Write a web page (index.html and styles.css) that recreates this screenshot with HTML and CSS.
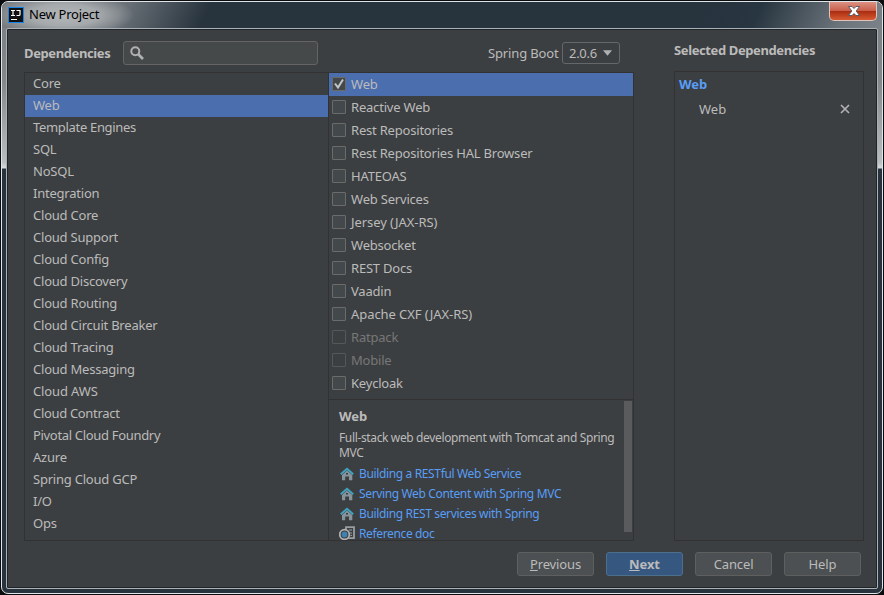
FILE: index.html
```html
<!DOCTYPE html>
<html lang="en">
<head>
<meta charset="utf-8">
<title>New Project</title>
<link rel="stylesheet" href="styles.css">
</head>
<body>
<svg class="defs" width="0" height="0" aria-hidden="true">
  <symbol id="home" viewBox="0 0 16 16"><path d="M8 4.500 13.300 9V14.300H10V10.500H6.200V14.300H3V9Z" fill="#87939a"/><path d="M7 7h2v1.500H7z" fill="#3c3f41"/><path d="M1.800 8.300 8 2.800l6.200 5.500" fill="none" stroke="#3fa3bf" stroke-width="2"/></symbol>
</svg>
<div class="window">
  <header class="titlebar">
    <svg class="logo" viewBox="0 0 16 16"><rect x=".5" y=".5" width="15" height="15" fill="#111" stroke="#1684e8"/><path d="M3 3.500h4M5 3.500v5M3 8.500h4M8.500 3.500H12v4q0 1-1 1H8.500" fill="none" stroke="#fff" stroke-width="1.200"/><path d="M3 12.500h6" stroke="#fff"/></svg>
    <span class="caption">New Project</span>
    <button class="close" aria-label="Close"><svg viewBox="0 0 12 10"><path d="M.5.500H4L6 2.500l2-2H11.500L8.200 5l3.300 4.500H8L6 7.500l-2 2H.5L3.800 5Z" fill="#fff" stroke="#50505e" stroke-width=".9"/></svg></button>
  </header>
  <main class="content">
    <section class="main">
      <div class="toolbar">
        <h2 class="deps">Dependencies</h2>
        <div class="search"><svg viewBox="0 0 14 14"><circle cx="5.300" cy="5.300" r="4" fill="none" stroke="#afb1b3" stroke-width="2"/><path d="m8 8 5 5" stroke="#afb1b3" stroke-width="2.600"/></svg></div>
        <span class="boot">Spring Boot</span>
        <div class="select"><span>2.0.6</span><svg viewBox="0 0 10 6"><path d="M0 0h10L5 6Z" fill="#afb1b3"/></svg></div>
      </div>
      <div class="panes">
        <ul class="cats">
          <li>Core</li><li class="on">Web</li><li class="tight">Template Engines</li><li>SQL</li><li>NoSQL</li><li>Integration</li><li>Cloud Core</li><li>Cloud Support</li><li>Cloud Config</li><li>Cloud Discovery</li><li>Cloud Routing</li><li>Cloud Circuit Breaker</li><li>Cloud Tracing</li><li>Cloud Messaging</li><li class="wide">Cloud AWS</li><li class="tight">Cloud Contract</li><li class="tight">Pivotal Cloud Foundry</li><li>Azure</li><li>Spring Cloud GCP</li><li>I/O</li><li>Ops</li>
        </ul>
        <div class="right">
          <ul class="checks">
            <li class="on"><i><svg viewBox="0 0 12 12"><path d="m2 5.500 3 4 5-8" fill="none" stroke="#c4c6c8" stroke-width="2"/></svg></i>Web</li><li><i></i>Reactive Web</li><li><i></i>Rest Repositories</li><li><i></i>Rest Repositories HAL Browser</li><li><i></i>HATEOAS</li><li><i></i>Web Services</li><li class="wide"><i></i>Jersey (JAX-RS)</li><li><i></i>Websocket</li><li><i></i>REST Docs</li><li><i></i>Vaadin</li><li class="wide"><i></i>Apache CXF (JAX-RS)</li><li class="off"><i></i>Ratpack</li><li class="off"><i></i>Mobile</li><li><i></i>Keycloak</li>
          </ul>
          <div class="detail">
            <div class="info">
              <h3>Web</h3>
              <p>Full-stack web development with Tomcat and Spring<br>MVC</p>
              <a><svg><use href="#home"/></svg>Building a RESTful Web Service</a>
              <a><svg><use href="#home"/></svg>Serving Web Content with Spring MVC</a>
              <a><svg><use href="#home"/></svg>Building REST services with Spring</a>
              <a><svg viewBox="0 0 16 16"><path d="M7 4V1.200H15v11H9" fill="none" stroke="#9a9da0" stroke-width="1.800"/><path d="M10 4h3M11 7h2M11.500 9.500H13" stroke="#9a9da0"/><circle cx="5.500" cy="8.500" r="4.800" fill="#3c3f41" stroke="#afb1b3" stroke-width="1.800"/><circle cx="5.500" cy="8.500" r="2.900" fill="#3d82b0"/></svg>Reference doc</a>
            </div>
            <div class="thumb"></div>
          </div>
        </div>
      </div>
    </section>
    <aside class="selected">
      <h2>Selected Dependencies</h2>
      <div class="box"><h3>Web</h3><div class="item"><span>Web</span><svg viewBox="0 0 10 10"><path d="m1 1 8 8M9 1 1 9" stroke="#afb1b3" stroke-width="1.700"/></svg></div></div>
    </aside>
    <footer class="buttons"><button><u>P</u>revious</button><button class="primary"><u>N</u>ext</button><button>Cancel</button><button>Help</button></footer>
  </main>
</div>
</body>
</html>
```
FILE: styles.css
```css
* { box-sizing: border-box; }
body { margin: 0; background: #0b0c0e; color: #bbb; font: 13px/22px "Noto Sans", sans-serif; overflow: hidden; }
ul, h2, h3, p { margin: 0; padding: 0; list-style: none; }
h2, h3 { font-size: 13px; }
h2 { letter-spacing: -.39px; }
.defs { display: block; height: 0; }
.window { width: 882px; height: 593px; margin: 1px; padding: 0 4px 4px; border: 1px solid #dfe5e9; border-radius: 7px; background: linear-gradient(#777d82 0, #84888b 80px, #b8bdc0 160px, #d8dadb 166px, #28333d 167px, #28333d 100%); }
.titlebar { height: 26px; margin: 0 -4px; padding: 0 6px; display: flex; align-items: flex-start; border-radius: 6px 6px 0 0; background: radial-gradient(ellipse 70px 22px at 62px 13px, #b4b7b9 0, #a5a9ac 50%, transparent 100%), linear-gradient(115deg, #777c80 0, #6d747a 110px, #27333d 190px, #27333d 630px, #283641 690px, #6d757c 770px, #7b8288 100%); }
.logo { width: 16px; height: 16px; margin-top: 5px; }
.caption { margin-left: 5px; color: #000; line-height: 25px; letter-spacing: -.25px; }
.close { width: 48px; height: 19px; margin-left: auto; margin-right: -1px; padding: 0 0 1px 2px; display: flex; justify-content: center; align-items: center; border: 1px solid #e0c3bd; border-top: 0; border-radius: 0 0 5px 5px; background: linear-gradient(#dc9183, #c9604b 48%, #a92b10 50%, #d65b32); }
.close svg { width: 12px; height: 10px; }
.content { height: 561px; padding: 8px 11px 0 16px; border: 1px solid #a9b1b6; box-shadow: inset 0 0 0 1px #222527; background: #3c3f41; display: grid; grid-template-columns: 610px 190px; grid-template-rows: 504px 1fr; column-gap: 41px; border-radius: 2px; }
.main { margin-left: 1px; }
.toolbar { height: 35px; padding-bottom: 4px; display: flex; align-items: center; }
.deps { width: 99px; }
.search { width: 195px; height: 24px; border: 1px solid #646464; border-radius: 3px; background: #45494a; padding: 4px 6px; }
.search svg { width: 14px; height: 14px; display: block; }
.boot { margin-left: 170px; width: 74px; letter-spacing: -.15px; white-space: nowrap; }
.select { width: 58px; height: 22px; border: 1px solid #646868; border-radius: 3px; display: flex; align-items: center; justify-content: space-between; padding: 0 7px 0 6px; letter-spacing: -.3px; }
.select svg { width: 9px; height: 6px; }
.panes { width: 610px; height: 469px; display: grid; grid-template-columns: 303px 305px; border: 1px solid #323232; }
.cats { letter-spacing: -.22px; }
.cats li { height: 22px; line-height: 21px; padding-left: 8px; }
.right { border-left: 1px solid #323232; }
.checks { height: 326px; letter-spacing: -.2px; }
.checks li { height: 23px; padding-bottom: 2px; display: flex; align-items: center; }
.cats .tight { letter-spacing: -.32px; }
.checks .wide { letter-spacing: -.07px; }
.cats .wide { letter-spacing: -.12px; }
.on { background: #4b6eaf; }
.checks i { width: 14px; height: 14px; margin: 0 5px 0 3px; border: 1px solid #6b6b6b; background: #43494a; border-radius: 1px; }
.checks i svg { display: block; width: 12px; height: 12px; }
.off { color: #777; }
.off i { border-color: #55585a; background: none; }
.detail { height: 141px; border-top: 1px solid #323232; display: flex; justify-content: space-between; overflow: hidden; }
.info { padding: 6px 0 0 10px; font-size: 12px; letter-spacing: -.36px; white-space: nowrap; }
.info h3 { line-height: 21px; letter-spacing: 0; }
.info p { line-height: 15px; padding: 3px 0 4px; }
.info a { display: flex; align-items: center; height: 20px; color: #589df6; }
.info svg { width: 16px; height: 16px; margin-right: 4px; }
.thumb { width: 8px; height: 131px; margin: 1px 1px 0 0; background: #595b5d; }
.selected h2 { height: 34px; line-height: 26px; }
.box { height: 470px; border: 1px solid #323232; padding: 1px 4px; }
.box h3 { color: #589df6; }
.item { display: flex; align-items: center; justify-content: space-between; height: 28px; padding: 0 9px 0 20px; }
.item svg { width: 10px; height: 10px; }
.buttons { grid-column: 1 / -1; display: flex; justify-content: flex-end; gap: 12px; padding: 11px 3px 0 0; }
.buttons button { width: 77px; height: 24px; padding: 0; border: 1px solid #5e6060; border-radius: 3px; background: #4c5052; color: #bbb; font: inherit; letter-spacing: -.12px; }
.buttons .primary { background: #365880; border-color: #4c708c; font-weight: bold; }
```
